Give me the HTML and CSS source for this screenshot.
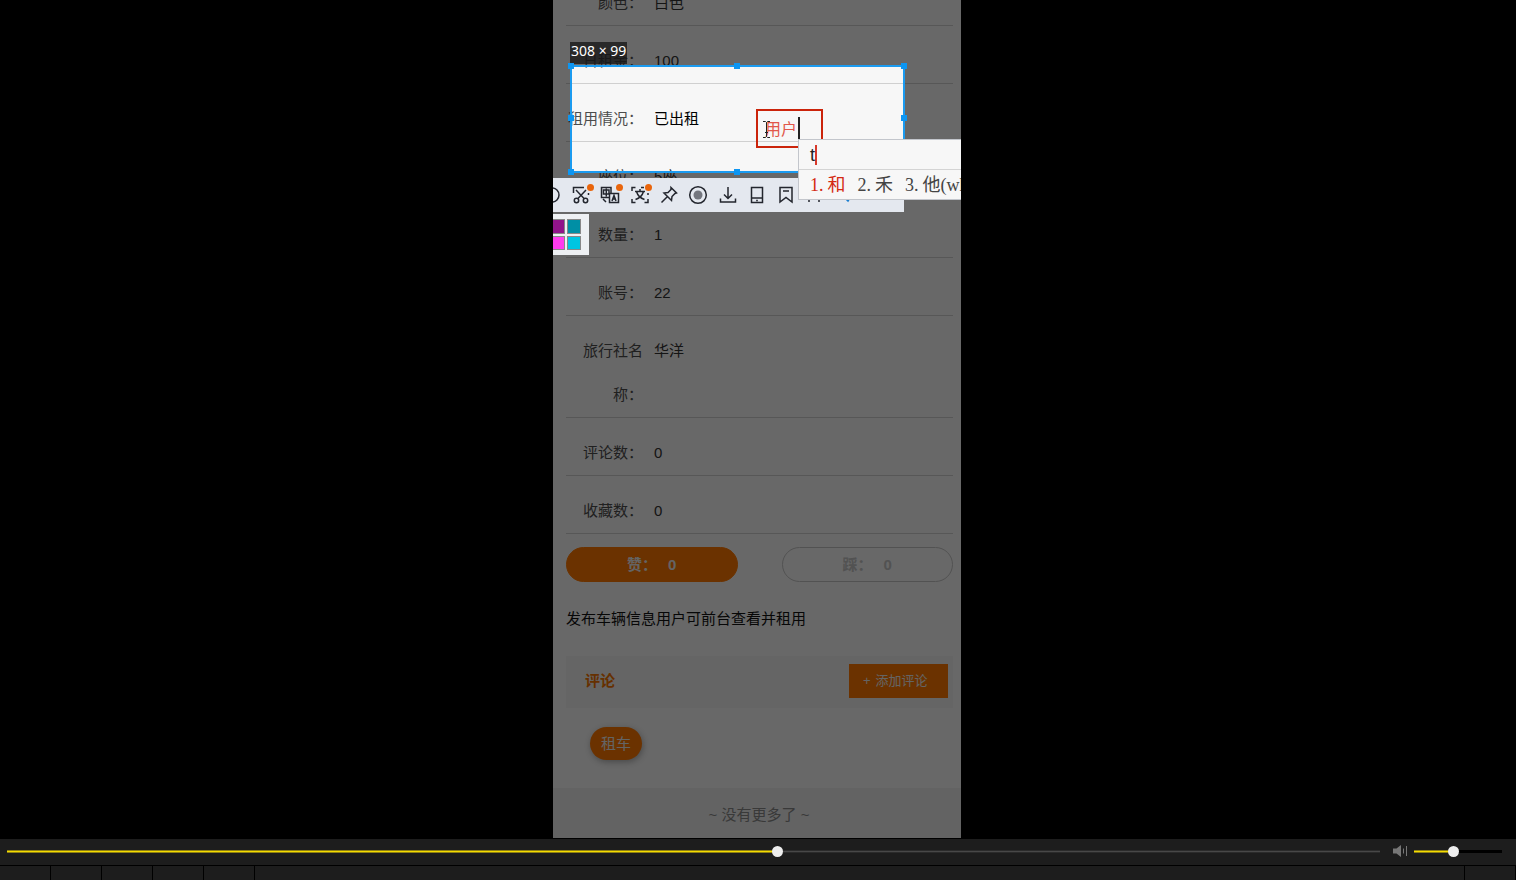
FILE: index.html
```html
<!DOCTYPE html>
<html lang="zh-CN">
<head>
    <meta charset="UTF-8">
    <meta name="viewport" content="width=device-width, initial-scale=1.0">
    <title>车辆信息</title>
    <link rel="stylesheet" href="styles.css">
</head>
<body>
    <main class="stage">
        <div class="screen">
            <div class="details">
                <dl class="info">
                    <div class="row"><dt>颜色：</dt><dd>白色</dd></div>
                    <div class="row"><dt>日租金：</dt><dd>100</dd></div>
                    <div class="row"><dt>租用情况：</dt><dd class="strong">已出租</dd></div>
                    <div class="row"><dt>座位：</dt><dd>5座</dd></div>
                    <div class="row"><dt>数量：</dt><dd>1</dd></div>
                    <div class="row"><dt>账号：</dt><dd>22</dd></div>
                    <div class="row"><dt>旅行社名称：</dt><dd>华洋</dd></div>
                    <div class="row"><dt>评论数：</dt><dd>0</dd></div>
                    <div class="row"><dt>收藏数：</dt><dd>0</dd></div>
                </dl>

                <div class="votes">
                    <button class="vote vote-up"><span>赞：</span><span>0</span></button>
                    <button class="vote vote-down"><span>踩：</span><span>0</span></button>
                </div>

                <p class="intro">发布车辆信息用户可前台查看并租用</p>

                <div class="comment-head">
                    <h2>评论</h2>
                    <button class="add-comment"><span>+</span><span>添加评论</span></button>
                </div>

                <button class="rent">租车</button>
            </div>
            <p class="no-more">~ 没有更多了 ~</p>

            <!-- screenshot selection -->
            <div class="selection">
                <span class="size">308 × 99</span>
                <i class="handle tl"></i><i class="handle tc"></i><i class="handle tr"></i>
                <i class="handle ml"></i><i class="handle mr"></i>
                <i class="handle bl"></i><i class="handle bc"></i>
            </div>

            <div class="note">
                <input type="text" value="用户" aria-label="文字">
                <i class="caret"></i>
                <svg class="ibeam" viewBox="0 0 9 17"><path d="M1 .5h2.500l1 1 1-1H8M4.500 1.500v14M1 16.500h2.500l1-1 1 1H8M3 11.500h3"/></svg>
            </div>

            <!-- screenshot toolbar -->
            <div class="toolbar">
                <button aria-label="椭圆"><svg viewBox="0 0 20 20"><circle cx="10" cy="10" r="7"/></svg></button>
                <button class="new" aria-label="长截图"><svg viewBox="0 0 20 20"><path d="M2.500 8V2.500H13M17.500 8v2M5 5l8.500 9M15 5l-8.500 9"/><circle cx="5.500" cy="15.500" r="2.200"/><circle cx="14.500" cy="15.500" r="2.200"/></svg></button>
                <button class="new" aria-label="翻译"><svg viewBox="0 0 20 20"><path d="M9 12.500H1.500v-10H11V8M3.500 5H9v4H3.500zM6.300 3.500v8M9.500 8.500h9v9h-9zM12 16l2-5.500 2 5.500M12.600 14h2.800M3 14l3 3"/></svg></button>
                <button class="new" aria-label="文字识别"><svg viewBox="0 0 20 20"><path d="M2 6V2.500h3.500M11 2.500h3M2 14v3.500h3.500M14.500 17.500H18V14M18 8v2M10 4v2.500M5 6.500h10M13.500 6.500C12.500 10 10 13 5.500 14.500M6.500 6.500C7.500 10 10 13 14.500 14.500"/></svg></button>
                <button aria-label="钉在屏幕"><svg viewBox="0 0 20 20"><path d="M12 2.500L17.500 8l-1.500.5-3 3-.5 4L5 8l4-.5 3-3zM8 12l-5.500 5.500"/></svg></button>
                <button aria-label="录屏"><svg viewBox="0 0 20 20"><circle cx="10" cy="10" r="8.300"/><circle class="dot" cx="10" cy="10" r="4.500"/></svg></button>
                <button aria-label="保存"><svg viewBox="0 0 20 20"><path d="M10 2v11M6 9.500l4 4 4-4M2.500 13.500V17h15v-3.500"/></svg></button>
                <button aria-label="发送到手机"><svg viewBox="0 0 20 20"><path d="M4.500 2.500h11v15h-11zM4.500 13h11M9.200 15.500h1.600"/></svg></button>
                <button aria-label="收藏"><svg viewBox="0 0 20 20"><path d="M4 2.500h12V17l-6-4.500L4 17zM7 6h6"/></svg></button>
                <button aria-label="撤销"><svg viewBox="0 0 20 20"><path d="M2 16h2M12 16h2M7 4L3 8l4 4M3 8h9a4 4 0 0 1 4 4"/></svg></button>
                <button class="done" aria-label="完成"><svg viewBox="0 0 20 20"><path d="M7 10l6 6 5-8"/></svg></button>
            </div>

            <div class="palette">
                <button class="purple" aria-label="紫色"></button>
                <button class="teal" aria-label="青色"></button>
                <button class="pink" aria-label="粉色"></button>
                <button class="cyan" aria-label="天蓝"></button>
            </div>

            <!-- input method popup -->
            <div class="ime">
                <div class="typed">t</div>
                <div class="words">
                    <span class="word first">1.<b>和</b></span>
                    <span class="word">2.<b>禾</b></span>
                    <span class="word">3.<b>他</b>(wh)</span>
                </div>
            </div>
        </div>
    </main>

    <footer class="player">
        <div class="controls">
            <input class="slider seek" type="range" min="0" max="1000" value="562" style="--fill: 56.2%" aria-label="播放进度">
            <svg class="speaker" viewBox="0 0 14 14"><path d="M0 4.500h3.500L8 1v12L3.500 9.500H0z"/><path class="wave" d="M10.500 4.500v5M13.500 2v10"/></svg>
            <input class="slider volume" type="range" min="0" max="1000" value="440" style="--fill: 44%" aria-label="音量">
        </div>
        <div class="buttons">
            <span></span><span></span><span></span><span></span><span></span>
            <span class="space"></span>
            <span></span>
        </div>
    </footer>
</body>
</html>
```

FILE: styles.css
```css
* {
    margin: 0;
    padding: 0;
    box-sizing: border-box;
}

body {
    height: 100vh;
    display: flex;
    flex-direction: column;
    background: #000;
    font-family: "Liberation Sans", "Noto Sans CJK SC", sans-serif;
    font-size: 15px;
    overflow: hidden;
}

button,
input {
    font: inherit;
    border: none;
    background: none;
}

.stage {
    flex: 1;
    min-height: 0;
    display: flex;
    justify-content: center;
}

.screen {
    position: relative;
    width: 100%;
    max-width: 408px;
    margin-right: 2px;
    display: flex;
    flex-direction: column;
    background: #f7f7f7;
    overflow: hidden;
}

/* the page is scrolled a little */
.details {
    margin-top: -32px;
    padding: 0 8px 28px 13px;
}

.row {
    display: flex;
    gap: 11px;
    padding-top: 13px;
    border-bottom: 1px solid #d0d0d0;
    line-height: 44px;
    color: #4c4c4c;
}

.row dt {
    width: 77px;
    text-align: right;
}

.row dd {
    color: #333;
}

.row .strong {
    color: #000;
}

.votes {
    display: flex;
    gap: 44px;
    padding-top: 13px;
}

.vote {
    flex: 1;
    height: 35px;
    display: flex;
    justify-content: center;
    align-items: center;
    gap: 11px;
    border: 1px solid #ff7800;
    border-radius: 18px;
    line-height: 33px;
    font-weight: bold;
}

.vote-up {
    background: #ff7800;
    color: #eee;
}

.vote-down {
    border-color: #c4c4c4;
    color: #c4c4c4;
}

.intro {
    padding: 15px 0;
    line-height: 44px;
    color: #111;
}

.comment-head {
    display: flex;
    justify-content: space-between;
    align-items: center;
    height: 52px;
    padding: 0 5px 2px 19px;
    background: #f1f1f1;
}

.comment-head h2 {
    font-size: 15px;
    line-height: 34px;
    color: #f27200;
}

.add-comment {
    width: 99px;
    height: 34px;
    display: flex;
    align-items: center;
    gap: 5px;
    padding-left: 14px;
    background: #ff7800;
    color: #eee;
    font-size: 13px;
    line-height: 34px;
}

.rent {
    display: block;
    width: 52px;
    height: 33px;
    margin: 19px 0 0 24px;
    padding-bottom: 2px;
    border-radius: 17px;
    background: #ff7800;
    color: #eee;
    box-shadow: 1px 2px 6px rgba(0, 0, 0, 0.3);
}

.no-more {
    flex: 1;
    padding: 5px 0 0 4px;
    background: #ececec;
    color: #888;
    line-height: 44px;
    text-align: center;
}

/* everything outside the selection is dimmed by its shadow */
.selection {
    position: absolute;
    left: 17px;
    top: 65px;
    width: 335px;
    height: 108px;
    border: 2px solid #1b9bf0;
    box-shadow: 0 0 0 2000px rgba(0, 0, 0, 0.58);
}

.size {
    position: absolute;
    left: -2px;
    top: -25px;
    height: 22px;
    padding: 0 1px;
    background: rgba(25, 25, 25, 0.8);
    color: #fff;
    font-family: "Noto Sans", sans-serif;
    font-size: 14px;
    line-height: 18px;
    white-space: nowrap;
}

.handle {
    position: absolute;
    width: 6px;
    height: 6px;
    margin: -4px;
    background: #0d96f2;
}

.tl { left: 0; top: 0; }
.tc { left: 50%; top: 0; }
.tr { right: 0; top: 0; }
.ml { left: 0; top: 50%; }
.mr { right: 0; top: 50%; }
.bl { left: 0; bottom: 0; }
.bc { left: 50%; bottom: 0; }

.note {
    position: absolute;
    left: 203px;
    top: 109px;
    width: 67px;
    height: 39px;
    border: 2px solid #cb240b;
}

.note input {
    width: 100%;
    height: 100%;
    padding: 0 0 2px 7px;
    color: #e2574a;
    font-size: 16px;
}

.caret {
    position: absolute;
    left: 40px;
    top: 6px;
    width: 2px;
    height: 23px;
    background: #222;
}

.ibeam {
    position: absolute;
    left: 4px;
    top: 10px;
    width: 9px;
    height: 17px;
    fill: none;
    stroke: #222;
}

.toolbar {
    position: absolute;
    left: -16px;
    top: 178px;
    width: 367px;
    height: 34px;
    padding-right: 15px;
    display: grid;
    grid-template-columns: repeat(12, 1fr);
    align-items: center;
    background: #e4e8ef;
}

.toolbar button {
    position: relative;
    height: 20px;
}

.toolbar svg {
    display: block;
    width: 20px;
    height: 20px;
    margin: 0 auto;
    fill: none;
    stroke: #23262e;
    stroke-width: 1.5;
}

.toolbar .dot {
    fill: #73767e;
    stroke: none;
}

.toolbar .done svg {
    stroke: #1b7fd0;
}

.toolbar .new::after {
    content: "";
    position: absolute;
    right: 2px;
    top: -1px;
    width: 7px;
    height: 7px;
    border-radius: 50%;
    background: #e9650c;
}

.palette {
    position: absolute;
    left: -8px;
    top: 214px;
    width: 44px;
    height: 41px;
    padding: 5px 8px 5px 5px;
    display: grid;
    grid-template-columns: 1fr 1fr;
    gap: 2px;
    background: #eef0f3;
}

.palette button {
    border: 1px solid #888;
}

.purple { background: #90148a; }
.teal { background: #008fa5; }
.pink { background: #ff3bee; }
.cyan { background: #00c5e2; }

.ime {
    position: absolute;
    left: 245px;
    right: -20px;
    top: 139px;
    height: 61px;
    border: 1px solid #c3c6cc;
    background: #f7f7f7;
    white-space: nowrap;
}

.typed {
    width: fit-content;
    height: 20px;
    margin: 5px 0 4px 11px;
    border-right: 2px solid #d8392b;
    color: #222;
    font-size: 18px;
    line-height: 20px;
}

.words {
    display: flex;
    gap: 12px;
    padding-left: 11px;
    border-top: 1px solid #d4d4d4;
    color: #444;
    font-family: "Liberation Serif", "Noto Sans CJK SC", serif;
    font-size: 18px;
    line-height: 30px;
}

.word b {
    margin-left: 4px;
    font-weight: normal;
}

.first {
    color: #d42a12;
}

.player {
    border-top: 1px solid #000;
    background: #1d1d1d;
}

.controls {
    display: flex;
    align-items: center;
    height: 26px;
    padding: 0 14px 2px 7px;
}

.slider {
    appearance: none;
    height: 11px;
}

.slider::-webkit-slider-runnable-track {
    height: 3px;
    background:
        linear-gradient(#8f8112 1px, #f5dc00 1px 2px, #8f8112 2px) 0 0 / var(--fill) 100% no-repeat,
        var(--rest);
}

.slider::-webkit-slider-thumb {
    appearance: none;
    width: 11px;
    height: 11px;
    margin-top: -4px;
    border-radius: 50%;
    background: #eee;
}

.seek {
    --rest: linear-gradient(#2b2b2b 1px, #484848 1px 2px, #2b2b2b 2px);
    flex: 1;
}

.volume {
    --rest: #000;
    width: 88px;
}

.speaker {
    width: 14px;
    height: 14px;
    margin: 0 7px 0 13px;
    fill: #777;
}

.wave {
    fill: none;
    stroke: #777;
}

.buttons {
    display: flex;
    height: 15px;
    border-top: 1px solid #000;
}

.buttons span {
    width: 51px;
    border-right: 1px solid #000;
}

.buttons .space {
    flex: 1;
}
```
